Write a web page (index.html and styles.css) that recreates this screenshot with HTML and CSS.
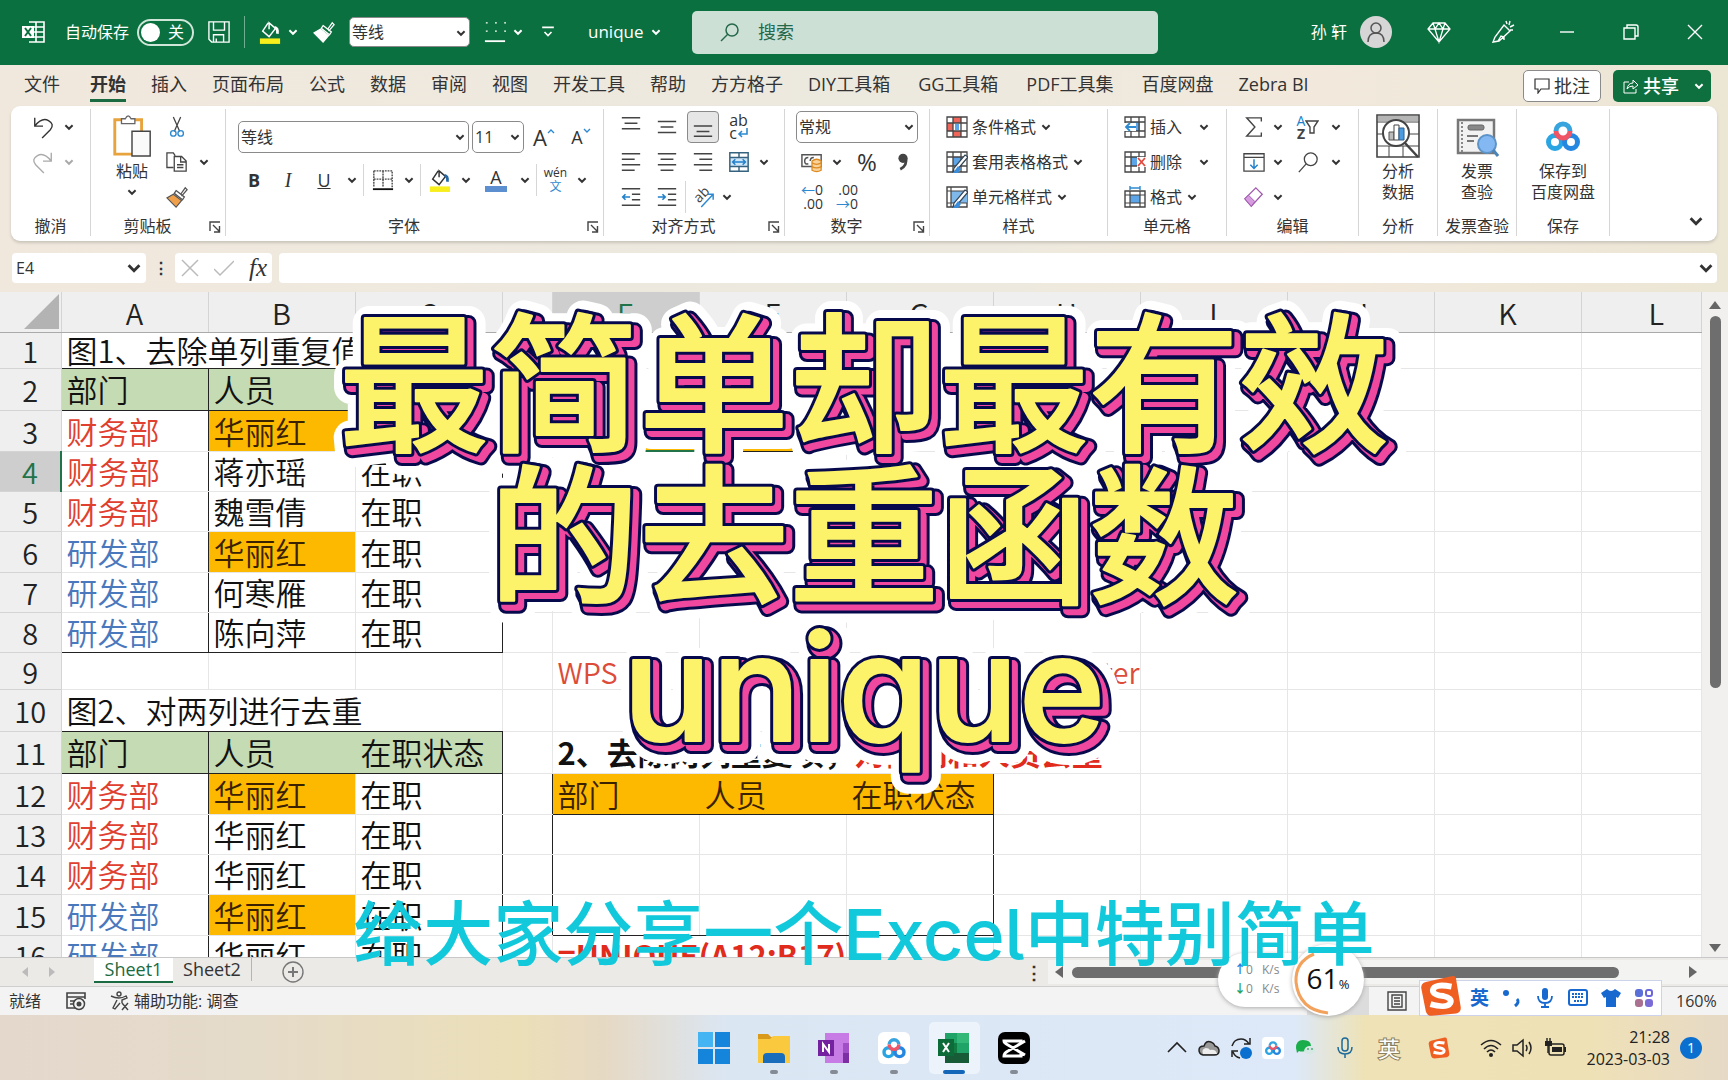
FILE: index.html
```html
<!DOCTYPE html>
<html lang="zh-CN">
<head>
    <meta charset="UTF-8">
    <meta name="viewport" content="width=device-width, initial-scale=1.0">
    <title>unique - Excel</title>
    <link rel="stylesheet" href="styles.css">
</head>
<body>

    <!-- shared icons -->
    <svg class="defs" aria-hidden="true">
        <symbol id="chev" viewBox="0 0 10 10"><path d="M2 3.5l3 3 3-3" fill="none" stroke="currentColor" stroke-width="1.6"/></symbol>
        <symbol id="bucket" viewBox="0 0 24 26"><path d="M10 3L4 12l7 6 7-9-7-6v7" fill="none" stroke="currentColor" stroke-width="1.6"/><path d="M17 8q4 1 3 7" fill="none" stroke="var(--drip)" stroke-width="3"/><path d="M1 20h22v6H1z" fill="#f7ee1b"/></symbol>
        <symbol id="brush" viewBox="0 0 24 24"><path d="M16 9l5-7 2 2-6 7" fill="none" stroke="currentColor" stroke-width="1.4"/><path d="M11 5l9 7-2 3-9-7z" fill="none" stroke="currentColor" stroke-width="1.4"/><path d="M8 9l9 7-6 7L1 13z" fill="var(--hair)" stroke="currentColor" stroke-width="1.2"/></symbol>
        <symbol id="launch" viewBox="0 0 12 12"><path d="M1 10V1h10M4 4l6 6M10.500 5v6H5" fill="none" stroke="#444" stroke-width="1.4"/></symbol>
        <symbol id="cells" viewBox="0 0 22 22"><path d="M1 1h20v20H1z" fill="#fff"/><path d="M7 6h9v9H7z" fill="#5ba5e8"/><path d="M1 1h20v20H1zM1 6h20M1 15h20M7 1v20M15 1v20" fill="none" stroke="#444" stroke-width="1.3"/></symbol>
        <symbol id="pan" viewBox="0 0 34 32"><g fill="none" stroke-width="5"><circle cx="9" cy="22" r="6.500" stroke="#29a5e3"/><circle cx="25" cy="22" r="6.500" stroke="#2587e0"/><path d="M10 11a7 7 0 0 1 14 0" stroke="#38a4dd"/><path d="M10 11a7 7 0 0 0 14 0" stroke="#ef5565"/></g></symbol>
        <symbol id="sogou" viewBox="0 0 36 36"><path d="M5 6L27 1q4-1 4 3l4 24q0 4-4 5L10 35q-4 0-5-4L1 11q0-4 4-5z" fill="#ef5f22"/><path d="M27 10q-15-3-16 3 0 4 9 5 8 2 6 6-3 5-17 1" fill="none" stroke="#fff" stroke-width="5"/></symbol>
    </svg>

    <header class="titlebar">
        <div class="quick">
            <svg class="logo" viewBox="0 0 24 24"><path d="M8 2h15v20H8M8 7h15M8 12h15M8 17h15M15 2v20" fill="none" stroke="#fff" stroke-width="1.6"/><path d="M1 6h12v12H1z" fill="#fff"/><path d="M4 8l6 8M10 8l-6 8" stroke="#0b703f" stroke-width="2"/></svg>
            <label class="autosave">自动保存 <input type="checkbox"><span class="switch">关</span></label>
            <button class="icon" aria-label="保存"><svg viewBox="0 0 24 24"><path d="M1 1h22v22H4l-3-3zM6 1v9h12V1M6 23v-8h11v8M9 23v-4" fill="none" stroke="currentColor" stroke-width="1.5"/></svg></button>
            <i class="rule"></i>
            <button class="split" aria-label="填充颜色"><svg class="ic"><use href="#bucket"/></svg><svg class="chev"><use href="#chev"/></svg></button>
            <button class="icon" aria-label="格式刷"><svg><use href="#brush"/></svg></button>
            <span class="combo qfont"><select aria-label="字体"><option>等线</option></select><svg class="chev"><use href="#chev"/></svg></span>
            <button class="split" aria-label="边框"><svg class="ic" viewBox="0 0 24 24"><path d="M2 2h22M2 11h22" stroke="currentColor" stroke-width="1.5" stroke-dasharray="2 8"/><path d="M1 22h22" stroke="currentColor" stroke-width="2"/></svg><svg class="chev"><use href="#chev"/></svg></button>
            <button class="icon more" aria-label="自定义"><svg viewBox="0 0 12 12"><path d="M1 2h10M3 6l3 3 3-3" fill="none" stroke="currentColor" stroke-width="1.4"/></svg></button>
            <button class="doc">unique <svg class="chev"><use href="#chev"/></svg></button>
        </div>
        <label class="search">
            <svg viewBox="0 0 20 20"><circle cx="12" cy="8" r="6" fill="none" stroke="#25684a" stroke-width="1.5"/><path d="M8 12l-7 7" stroke="#25684a" stroke-width="1.5"/></svg>
            <input type="text" placeholder="搜索" aria-label="搜索">
        </label>
        <div class="account">
            <span>孙 轩</span>
            <svg class="avatar" viewBox="0 0 32 32"><circle cx="16" cy="16" r="16" fill="#d6d6d6"/><circle cx="16" cy="12" r="5" fill="none" stroke="#555" stroke-width="1.5"/><path d="M8 26q0-9 8-9t8 9" fill="none" stroke="#555" stroke-width="1.5"/></svg>
            <button aria-label="会员"><svg viewBox="0 0 24 24"><path d="M6 3h12l5 6-11 13L1 9zM1 9h22M8 9l4 13 4-13M6 3l2 6 4-6 4 6 2-6" fill="none" stroke="currentColor" stroke-width="1.3"/></svg></button>
            <button aria-label="画笔"><svg viewBox="0 0 24 24"><path d="M13 5l6 6L8 21l-6 1 2-5zM7 21l3-5 3 1v3M15 1l1 3M19 1l-1 4M23 5l-4 2M22 10h-3" fill="none" stroke="currentColor" stroke-width="1.4"/></svg></button>
            <button aria-label="最小化"><svg viewBox="0 0 24 24"><path d="M5 12h14" stroke="currentColor" stroke-width="1.4"/></svg></button>
            <button aria-label="还原"><svg viewBox="0 0 24 24"><path d="M5 8h11v11H5zM8 8V5h9q2 0 2 2v9h-3" fill="none" stroke="currentColor" stroke-width="1.4"/></svg></button>
            <button aria-label="关闭"><svg viewBox="0 0 24 24"><path d="M5 5l14 14M19 5L5 19" stroke="currentColor" stroke-width="1.4"/></svg></button>
        </div>
    </header>

    <nav class="tabs">
        <a href="#">文件</a>
        <a href="#" class="active">开始</a>
        <a href="#">插入</a>
        <a href="#">页面布局</a>
        <a href="#">公式</a>
        <a href="#">数据</a>
        <a href="#">审阅</a>
        <a href="#">视图</a>
        <a href="#">开发工具</a>
        <a href="#">帮助</a>
        <a href="#">方方格子</a>
        <a href="#" class="addin">DIY工具箱</a>
        <a href="#" class="addin">GG工具箱</a>
        <a href="#" class="addin">PDF工具集</a>
        <a href="#">百度网盘</a>
        <a href="#">Zebra BI</a>
        <button class="comment"><svg viewBox="0 0 16 16"><path d="M1 1h14v10H7l-3 4v-4H1z" fill="none" stroke="currentColor" stroke-width="1.2"/></svg>批注</button>
        <button class="share"><svg viewBox="0 0 16 16"><path d="M6 4H1v11h12v-4M4 11q1-6 6-6V2l5 5-5 4V8q-4 0-6 3z" fill="none" stroke="currentColor" stroke-width="1"/></svg>共享<svg class="chev"><use href="#chev"/></svg></button>
    </nav>

    <section class="ribbon">
        <div class="group undo">
            <div class="tools">
                <button aria-label="撤消"><svg class="ic" viewBox="0 0 24 24"><path d="M3 2v9h9M3 11q8-10 15-6t2 10l-9 9" fill="none" stroke="currentColor" stroke-width="1.5"/></svg></button>
                <svg class="chev"><use href="#chev"/></svg>
                <button class="off" aria-label="重做"><svg class="ic" viewBox="0 0 24 24"><path d="M21 2v9h-9M21 11Q13 1 6 5t-2 10l9 9" fill="none" stroke="currentColor" stroke-width="1.5"/></svg></button>
                <svg class="chev off"><use href="#chev"/></svg>
            </div>
            <h2>撤消</h2>
        </div>

        <div class="group clip titled">
            <div class="tools">
                <button class="big"><svg viewBox="0 0 40 46"><path d="M2 6h28v36H2z" fill="#fff" stroke="#e8a33d" stroke-width="3"/><path d="M9 10V5h4q3-6 6 0h4v5z" fill="#fff" stroke="#666" stroke-width="1.4"/><path d="M20 18h19v26H20z" fill="#fafafa" stroke="#444" stroke-width="1.5"/></svg>粘贴<svg class="chev"><use href="#chev"/></svg></button>
                <button aria-label="剪切"><svg class="ic" viewBox="0 0 24 24"><path d="M8 1l7 16M16 1L9 17" stroke="#444" stroke-width="1.4"/><circle cx="8" cy="19" r="3" fill="none" stroke="#2e8ad0" stroke-width="1.5"/><circle cx="16" cy="19" r="3" fill="none" stroke="#2e8ad0" stroke-width="1.5"/></svg></button>
                <i></i>
                <button aria-label="复制"><svg class="ic" viewBox="0 0 24 24"><path d="M8 18H1V2h7l2 3M9 6h8l5 5v11H9zM16 6v6h6M12 15h7M12 18h7" fill="none" stroke="#444" stroke-width="1.4"/></svg></button>
                <svg class="chev"><use href="#chev"/></svg>
                <button class="painter" aria-label="格式刷"><svg class="ic"><use href="#brush"/></svg></button>
            </div>
            <h2>剪贴板</h2>
            <svg class="launch"><use href="#launch"/></svg>
        </div>

        <div class="group font titled">
            <div class="tools">
                <div class="row">
                    <span class="combo family"><select aria-label="字体名称"><option>等线</option></select><svg class="chev"><use href="#chev"/></svg></span>
                    <span class="combo size"><select aria-label="字号"><option>11</option></select><svg class="chev"><use href="#chev"/></svg></span>
                    <button class="grow">A<svg viewBox="0 0 8 8"><path d="M1 6l3-3 3 3" fill="none" stroke="#2e8ad0" stroke-width="1.4"/></svg></button>
                    <button class="grow less">A<svg viewBox="0 0 8 8"><path d="M1 2l3 3 3-3" fill="none" stroke="#2e8ad0" stroke-width="1.4"/></svg></button>
                </div>
                <div class="row marks">
                    <button><b>B</b></button>
                    <button class="serif"><em>I</em></button>
                    <button><u>U</u></button>
                    <svg class="chev"><use href="#chev"/></svg>
                    <button class="ruled" aria-label="边框"><svg class="ic" viewBox="0 0 24 24"><path d="M2 2h20v18M2 2v18M12 2v18M2 11h20" fill="none" stroke="#444" stroke-width="1.5" stroke-dasharray="2 1"/><path d="M1 22h22" stroke="#111" stroke-width="2"/></svg></button>
                    <svg class="chev"><use href="#chev"/></svg>
                    <button class="ruled" aria-label="填充颜色"><svg class="ic"><use href="#bucket"/></svg></button>
                    <svg class="chev"><use href="#chev"/></svg>
                    <button class="ink">A</button>
                    <svg class="chev"><use href="#chev"/></svg>
                    <button class="ruled pinyin">wén<span>文</span></button>
                    <svg class="chev"><use href="#chev"/></svg>
                </div>
            </div>
            <h2>字体</h2>
            <svg class="launch"><use href="#launch"/></svg>
        </div>

        <div class="group align titled">
            <div class="tools">
                <button aria-label="顶端对齐"><svg class="ic" viewBox="0 0 24 24"><path d="M2 2h20M5 8h14M2 14h20" stroke="#444" stroke-width="1.6"/></svg></button>
                <button aria-label="垂直居中"><svg class="ic" viewBox="0 0 24 24"><path d="M2 6h20M5 12h14M2 18h20" stroke="#444" stroke-width="1.6"/></svg></button>
                <button class="pressed" aria-label="底端对齐"><svg class="ic" viewBox="0 0 24 24"><path d="M2 11h20M5 17h14M2 22h20" stroke="#444" stroke-width="1.6"/></svg></button>
                <button class="wrap">ab<br>c<svg viewBox="0 0 12 12"><path d="M10 1v6H2M5 4L2 7l3 3" fill="none" stroke="#2e8ad0" stroke-width="1.6"/></svg></button>
                <i></i>
                <button aria-label="左对齐"><svg class="ic" viewBox="0 0 24 24"><path d="M2 3h20M2 9h14M2 15h20M2 21h14" stroke="#444" stroke-width="1.6"/></svg></button>
                <button aria-label="居中"><svg class="ic" viewBox="0 0 24 24"><path d="M2 3h20M5 9h14M2 15h20M5 21h14" stroke="#444" stroke-width="1.6"/></svg></button>
                <button aria-label="右对齐"><svg class="ic" viewBox="0 0 24 24"><path d="M2 3h20M8 9h14M2 15h20M8 21h14" stroke="#444" stroke-width="1.6"/></svg></button>
                <button aria-label="合并后居中"><svg class="ic" viewBox="0 0 24 24"><path d="M2 2h20v20H2z" fill="#fff"/><path d="M2 7h20v10H2z" fill="#cfe6f8"/><path d="M2 2h20v20H2zM2 7h20M2 17h20M12 2v5M12 17v5" fill="none" stroke="#35627f" stroke-width="1.6"/><path d="M5 12h14M8 9l-3 3 3 3M16 9l3 3-3 3" fill="none" stroke="#2080cc" stroke-width="1.6"/></svg></button>
                <svg class="chev"><use href="#chev"/></svg>
                <button aria-label="减少缩进"><svg class="ic" viewBox="0 0 24 24"><path d="M2 3h20M13 9h9M13 15h9M2 21h20" stroke="#444" stroke-width="1.6"/><path d="M3 12h8M6 9l-3 3 3 3" fill="none" stroke="#2080cc" stroke-width="1.8"/></svg></button>
                <button aria-label="增加缩进"><svg class="ic" viewBox="0 0 24 24"><path d="M2 3h20M13 9h9M13 15h9M2 21h20" stroke="#444" stroke-width="1.6"/><path d="M2 12h8M7 9l3 3-3 3" fill="none" stroke="#2080cc" stroke-width="1.8"/></svg></button>
                <button class="ruled" aria-label="方向"><svg class="ic" viewBox="0 0 24 24"><text x="2" y="16" font-size="15" fill="#444" transform="rotate(-45 8 12)">ab</text><path d="M9 23L22 9M16 9h6v6" fill="none" stroke="#2e8ad0" stroke-width="1.6"/></svg></button>
                <svg class="chev near"><use href="#chev"/></svg>
            </div>
            <h2>对齐方式</h2>
            <svg class="launch"><use href="#launch"/></svg>
        </div>

        <div class="group number titled">
            <div class="tools">
                <span class="combo format"><select aria-label="数字格式"><option>常规</option></select><svg class="chev"><use href="#chev"/></svg></span>
                <button aria-label="会计格式"><svg class="ic" viewBox="0 0 24 24"><path d="M1 4h21v13H1zM8 7q-4 0-4 4t4 3M14 7q-4 0-4 4" fill="none" stroke="#555" stroke-width="1.6"/><path d="M12 11q5-4 10 0v10q-5 3-10 0z" fill="#f8d29a" stroke="#dd8b20" stroke-width="1.4"/><path d="M12 13q5 3 10 0M12 17q5 3 10 0" fill="none" stroke="#dd8b20" stroke-width="1.4"/></svg></button>
                <svg class="chev"><use href="#chev"/></svg>
                <button class="percent">%</button>
                <button aria-label="千位分隔"><svg class="ic" viewBox="0 0 24 24"><circle cx="12" cy="8" r="5" fill="#444"/><path d="M15 7q2 9-6 13" fill="none" stroke="#444" stroke-width="3"/></svg></button>
                <button class="decimal"><span>←</span>0<br>.00</button>
                <i></i>
                <button class="decimal">.00<br><span>→</span>0</button>
            </div>
            <h2>数字</h2>
            <svg class="launch"><use href="#launch"/></svg>
        </div>

        <div class="group styles">
            <div class="tools list">
                <button><svg class="ic" viewBox="0 0 22 22"><path d="M1 1h20v20H1z" fill="#fff"/><path d="M7 1h8v6H7zM7 15h8v6H7zM1 7h6v8H1z" fill="#f0655a"/><path d="M9 8h4v6H9z" fill="#5ba5e8"/><path d="M1 1h20v20H1zM1 7h20M1 15h20M7 1v20M15 1v20" fill="none" stroke="#444" stroke-width="1.3"/></svg>条件格式<svg class="chev"><use href="#chev"/></svg></button>
                <button><svg class="ic" viewBox="0 0 22 22"><use href="#cells"/><path d="M22 6L11 19l-4 2 1-4L19 4z" fill="#fff" stroke="#345" stroke-width="1.2"/><path d="M12 15l-5 7h5l3-4z" fill="#3a8ddb"/></svg>套用表格格式<svg class="chev"><use href="#chev"/></svg></button>
                <button><svg class="ic" viewBox="0 0 22 22"><path d="M1 1h20v20H1z" fill="#fff" stroke="#444" stroke-width="1.4"/><path d="M5 5h16v12H5z" fill="#7fb9ec"/><path d="M1 5h20M1 17h20M5 1v20" stroke="#444" stroke-width="1.2"/><path d="M22 6L11 19l-4 2 1-4L19 4z" fill="#fff" stroke="#345" stroke-width="1.2"/><path d="M12 15l-5 7h5l3-4z" fill="#3a8ddb"/></svg>单元格样式<svg class="chev"><use href="#chev"/></svg></button>
            </div>
            <h2>样式</h2>
        </div>

        <div class="group cellops">
            <div class="tools list">
                <button><svg class="ic" viewBox="0 0 22 22"><use href="#cells"/><path d="M0 7h12v8H0z" fill="#fff"/><path d="M2 11h10M6 7l-4 4 4 4" fill="none" stroke="#2e8ad0" stroke-width="1.8"/></svg>插入<svg class="chev far"><use href="#chev"/></svg></button>
                <button><svg class="ic" viewBox="0 0 22 22"><use href="#cells"/><path d="M13 6h9v10h-9z" fill="#fff"/><path d="M14 7l7 8M21 7l-7 8" stroke="#e3493c" stroke-width="1.8"/></svg>删除<svg class="chev far"><use href="#chev"/></svg></button>
                <button><svg class="ic" viewBox="0 0 22 22"><path d="M1 5h20v16H1z" fill="#fff" stroke="#444" stroke-width="1.4"/><path d="M6 9h10v8H6z" fill="#5ba5e8"/><path d="M1 9h20M1 17h20M6 5v16M16 5v16" stroke="#444" stroke-width="1.2"/><path d="M6 2h10M6 0v4M16 0v4" stroke="#2e8ad0" stroke-width="1.4"/></svg>格式<svg class="chev"><use href="#chev"/></svg></button>
            </div>
            <h2>单元格</h2>
        </div>

        <div class="group edit">
            <div class="tools">
                <button aria-label="求和"><svg class="ic" viewBox="0 0 24 24"><path d="M20 6V2H4l9 10-9 10h16v-4" fill="none" stroke="#444" stroke-width="1.5"/></svg></button>
                <svg class="chev"><use href="#chev"/></svg>
                <button class="sort"><span>A<br><b>Z</b></span><svg viewBox="0 0 14 16"><path d="M1 2h12L9 8v6H5V8z" fill="none" stroke="#444" stroke-width="1.4"/></svg></button>
                <svg class="chev"><use href="#chev"/></svg>
                <button aria-label="填充"><svg class="ic" viewBox="0 0 24 24"><path d="M1 3h22v19H1zM1 7h22" fill="none" stroke="#444" stroke-width="1.4"/><path d="M12 9v10M8 15l4 4 4-4" fill="none" stroke="#2080cc" stroke-width="1.6"/></svg></button>
                <svg class="chev"><use href="#chev"/></svg>
                <button aria-label="查找"><svg class="ic" viewBox="0 0 24 24"><circle cx="15" cy="9" r="7" fill="none" stroke="#444" stroke-width="1.4"/><path d="M10 14l-8 9" stroke="#444" stroke-width="1.4"/></svg></button>
                <svg class="chev"><use href="#chev"/></svg>
                <button aria-label="清除"><svg class="ic" viewBox="0 0 24 24"><path d="M14 2l7 7L9 22l-7-8z" fill="#fff" stroke="#a05aad" stroke-width="1.4"/><path d="M6 10l7 7-4 5-7-8z" fill="#d79be0" stroke="#a05aad"/></svg></button>
                <svg class="chev"><use href="#chev"/></svg>
            </div>
            <h2>编辑</h2>
        </div>

        <div class="group small">
            <div class="tools">
                <button class="big"><svg viewBox="0 0 44 44"><path d="M1 1h42v42H1z" fill="#fff" stroke="#444" stroke-width="1.6"/><path d="M2 2h40v5H2z" fill="#b5b5b5"/><path d="M1 8h42M1 20h42M1 32h42M13 32v11M27 32v11" stroke="#444"/><circle cx="20" cy="19" r="13" fill="#fff" stroke="#444" stroke-width="2"/><path d="M13 18h5v8h-5z" fill="#bbb" stroke="#555"/><path d="M18 11h5v15h-5z" fill="#fff" stroke="#444"/><path d="M23 14h5v12h-5z" fill="#4a9be0" stroke="#2a5f90"/><path d="M29 29l13 14" stroke="#444" stroke-width="2.500"/></svg>分析<br>数据</button>
            </div>
            <h2>分析</h2>
        </div>

        <div class="group small">
            <div class="tools">
                <button class="big"><svg viewBox="0 0 44 44"><path d="M3 6h36v33H3z" fill="#f2f2f2" stroke="#777" stroke-width="2.500"/><path d="M7 8v30" stroke="#888" stroke-width="2" stroke-dasharray="2 2"/><rect x="13" y="11" width="16" height="5" rx="2" fill="#888" stroke="#666"/><path d="M12 22h11M12 27h7" stroke="#777" stroke-width="2"/><circle cx="32" cy="30" r="9" fill="#84b8f2" stroke="#5c93c8" stroke-width="2"/><path d="M38 36l5 6" stroke="#4c83b8" stroke-width="3"/></svg>发票<br>查验</button>
            </div>
            <h2>发票查验</h2>
        </div>

        <div class="group save">
            <div class="tools">
                <button class="big"><svg viewBox="0 -6 34 44"><use href="#pan" width="34" height="32"/></svg>保存到<br>百度网盘</button>
            </div>
            <h2>保存</h2>
        </div>
        <button class="collapse" aria-label="折叠功能区"><svg class="chev"><use href="#chev"/></svg></button>
    </section>

    <div class="formula">
        <label class="namebox"><input type="text" value="E4" aria-label="名称框"><svg class="chev"><use href="#chev"/></svg></label>
        <span class="grip">⋮</span>
        <div class="fx">
            <button aria-label="取消"><svg viewBox="0 0 20 20"><path d="M2 2l16 16M18 2L2 18" stroke="#bbb" stroke-width="1.5"/></svg></button>
            <button aria-label="输入"><svg viewBox="0 0 20 20"><path d="M0 11l6 6L20 3" fill="none" stroke="#bbb" stroke-width="1.5"/></svg></button>
            <button><i>fx</i></button>
        </div>
        <label class="entry"><input type="text" aria-label="编辑栏"><svg class="chev"><use href="#chev"/></svg></label>
    </div>

    <main class="sheet">
        <div class="gridwrap">
            <table class="grid">
                <colgroup>
                    <col class="c-num"><col class="c-std"><col class="c-std"><col class="c-std"><col class="c-gap"><col class="c-std"><col class="c-std"><col class="c-std"><col class="c-std"><col class="c-std"><col class="c-std"><col class="c-std"><col>
                </colgroup>
                <thead>
                    <tr><th class="corner"><svg viewBox="0 0 34 34"><path d="M34 0v34H0z" fill="#b3b3b3"/></svg></th><th>A</th><th>B</th><th>C</th><th>D</th><th class="sel">E</th><th>F</th><th>G</th><th>H</th><th>I</th><th>J</th><th>K</th><th class="last">L</th></tr>
                </thead>
                <tbody>
                    <tr class="h36"><th>1</th><td colspan="3" class="bb">图1、去除单列重复值</td><td></td><td></td><td></td><td></td><td></td><td></td><td></td><td></td><td></td></tr>
                    <tr class="h42"><th>2</th><td class="head br">部门</td><td class="head flush">人员</td><td class="head br">在职状态</td><td></td><td></td><td></td><td></td><td></td><td></td><td></td><td></td><td></td></tr>
                    <tr class="h41"><th>3</th><td class="red br">财务部</td><td class="hot">华丽红</td><td class="br">在职</td><td></td><td class="hot green"></td><td class="hot bb"></td><td></td><td></td><td></td><td></td><td></td><td></td></tr>
                    <tr class="h40"><th class="sel">4</th><td class="red br">财务部</td><td>蒋亦瑶</td><td class="br">在职</td><td></td><td></td><td></td><td></td><td></td><td></td><td></td><td></td><td></td></tr>
                    <tr class="h40"><th>5</th><td class="red br">财务部</td><td>魏雪倩</td><td class="br">在职</td><td></td><td></td><td></td><td></td><td></td><td></td><td></td><td></td><td></td></tr>
                    <tr class="h41"><th>6</th><td class="blue br">研发部</td><td class="hot">华丽红</td><td class="br">在职</td><td></td><td></td><td></td><td></td><td></td><td></td><td></td><td></td><td></td></tr>
                    <tr class="h40"><th>7</th><td class="blue br">研发部</td><td>何寒雁</td><td class="br">在职</td><td></td><td></td><td></td><td></td><td></td><td></td><td></td><td></td><td></td></tr>
                    <tr class="h40"><th>8</th><td class="blue br bb">研发部</td><td class="bb">陈向萍</td><td class="br bb">在职</td><td></td><td></td><td></td><td></td><td></td><td></td><td></td><td></td><td></td></tr>
                    <tr class="h37"><th>9</th><td></td><td></td><td></td><td></td><td colspan="4" class="note"><div><span>WPS</span><span>filter</span></div></td><td></td><td></td><td></td><td></td></tr>
                    <tr class="h42"><th>10</th><td colspan="3" class="bb">图2、对两列进行去重</td><td></td><td></td><td></td><td></td><td></td><td></td><td></td><td></td><td></td></tr>
                    <tr class="h42"><th>11</th><td class="head br">部门</td><td class="head flush">人员</td><td class="head br">在职状态</td><td></td><td colspan="4" class="title">2、去除两列重复项，<span>对部门和人员去重</span></td><td></td><td></td><td></td><td></td></tr>
                    <tr class="h41"><th>12</th><td class="red br">财务部</td><td class="hot">华丽红</td><td class="br">在职</td><td class="br"></td><td class="hot bt bb flush">部门</td><td class="hot bt bb flush">人员</td><td class="hot bt bb br">在职状态</td><td></td><td></td><td></td><td></td><td></td></tr>
                    <tr class="h40"><th>13</th><td class="red br">财务部</td><td>华丽红</td><td class="br">在职</td><td class="br"></td><td></td><td></td><td class="br"></td><td></td><td></td><td></td><td></td><td></td></tr>
                    <tr class="h40"><th>14</th><td class="red br">财务部</td><td>华丽红</td><td class="br">在职</td><td class="br"></td><td></td><td></td><td class="br"></td><td></td><td></td><td></td><td></td><td></td></tr>
                    <tr class="h41"><th>15</th><td class="blue br">研发部</td><td class="hot">华丽红</td><td class="br">在职</td><td class="br"></td><td class="bb"></td><td class="bb"></td><td class="br bb"></td><td></td><td></td><td></td><td></td><td></td></tr>
                    <tr class="h40"><th>16</th><td class="blue br">研发部</td><td>华丽红</td><td class="br">在职</td><td></td><td colspan="2" class="result">=UNIQUE(A12:B17)</td><td></td><td></td><td></td><td></td><td></td><td></td></tr>
                </tbody>
            </table>
        </div>
        <div class="vscroll">
            <svg viewBox="0 0 12 10"><path d="M6 1l6 8H0z" fill="#666"/></svg>
            <i></i>
            <svg viewBox="0 0 12 10"><path d="M0 1h12L6 9z" fill="#666"/></svg>
        </div>
    </main>

    <div class="sheetbar">
        <div class="arrows"><svg viewBox="0 0 8 10"><path d="M7 0v10L1 5z" fill="#bbb"/></svg><svg viewBox="0 0 8 10"><path d="M1 0v10l6-5z" fill="#bbb"/></svg></div>
        <a href="#" class="active">Sheet1</a>
        <a href="#">Sheet2</a>
        <button aria-label="新工作表"><svg viewBox="0 0 22 22"><circle cx="11" cy="11" r="10" fill="none" stroke="#777" stroke-width="1.4"/><path d="M11 6v10M6 11h10" stroke="#777" stroke-width="2"/></svg></button>
        <span class="grip">⋮</span>
        <div class="hscroll"><svg viewBox="0 0 10 12"><path d="M9 0v12L1 6z" fill="#666"/></svg><i></i><svg viewBox="0 0 10 12"><path d="M1 0v12l8-6z" fill="#666"/></svg></div>
    </div>

    <footer class="status">
        <span>就绪</span>
        <svg viewBox="0 0 20 20"><path d="M9 17H1V2h18v6M1 6h18M4 10h5M4 13h3" fill="none" stroke="#444" stroke-width="1.6"/><circle cx="13" cy="13" r="5.500" fill="none" stroke="#444" stroke-width="1.5"/><circle cx="13" cy="13" r="2.500" fill="#444"/></svg>
        <span class="access"><svg viewBox="0 0 20 20"><circle cx="9" cy="3" r="2" fill="none" stroke="#444" stroke-width="1.4"/><path d="M1 5q8 4 15 0l1 2-5 2v3M7 9l-4 8 2 1 5-6M12 12l6 7M18 12l-6 7" fill="none" stroke="#444" stroke-width="1.4"/></svg>辅助功能: 调查</span>
        <span class="viewon"></span>
        <svg class="pageview" viewBox="0 0 20 20"><path d="M1 1h18v18H1zM5 4h10v12H5zM7 7h6M7 10h6M7 13h6" fill="none" stroke="#444" stroke-width="1.4"/></svg>
        <div class="ime">
            <svg class="s" viewBox="0 0 36 36"><use href="#sogou"/></svg>
            <b>英</b>
            <svg viewBox="0 0 20 20"><circle cx="4" cy="5" r="3" fill="#1769cf"/><path d="M15 11q3 3-2 7" fill="none" stroke="#1769cf" stroke-width="3"/></svg>
            <svg viewBox="0 0 20 20"><rect x="7" y="0" width="6" height="12" rx="3" fill="#1769cf"/><path d="M3 8q0 7 7 7t7-7M10 15v4M6 19h8" fill="none" stroke="#1769cf" stroke-width="1.8"/></svg>
            <svg viewBox="0 0 20 20"><rect x="1" y="2" width="18" height="15" rx="2" fill="none" stroke="#1769cf" stroke-width="2"/><path d="M4 6h12M4 9h12M6 13h8" stroke="#1769cf" stroke-width="2" stroke-dasharray="2 1"/></svg>
            <svg viewBox="0 0 20 20"><path d="M6 1q4 4 8 0l6 4-3 5-2-1v10H5V9l-2 1-3-5z" fill="#1769cf"/></svg>
            <svg viewBox="0 0 20 20"><rect x="1" y="1" width="8" height="8" rx="3" fill="#5a6fd8"/><rect x="12" y="2" width="6" height="6" rx="2" fill="none" stroke="#6a67dc" stroke-width="2"/><rect x="1" y="11" width="8" height="8" rx="3" fill="#a9708f"/><rect x="11" y="11" width="8" height="8" rx="3" fill="#7a6bd6"/></svg>
        </div>
        <span class="zoom">160%</span>
    </footer>

    <div class="taskbar">
        <div class="apps">
            <a href="#" aria-label="开始"><svg viewBox="0 0 32 32"><path d="M0 0h15v15H0zM17 0h15v15H17zM0 17h15v15H0zM17 17h15v15H17z" fill="#1585dc"/><path d="M0 0h15v15H0z" fill="#44b4f2"/></svg></a>
            <a href="#" class="run" aria-label="文件夹"><svg viewBox="0 0 32 32"><path d="M0 2h10l3 3h18v8H0z" fill="#d99a1c"/><path d="M0 7h12l3-3h17v27H0z" fill="#fbc93d"/><path d="M5 31v-6q0-4 4-4h14q4 0 4 4v6z" fill="#1a6dba"/></svg></a>
            <a href="#" class="run" aria-label="OneNote"><svg viewBox="0 0 32 32"><path d="M7 1h24v30H7z" fill="#c67be5"/><path d="M25 11h6v10h-6z" fill="#a14fc7"/><path d="M25 21h6v10h-6z" fill="#7c2fa3"/><path d="M0 8h16v16H0z" fill="#7522a0"/><path d="M5 20v-8l6 8v-8" fill="none" stroke="#fff" stroke-width="2"/></svg></a>
            <a href="#" class="run" aria-label="百度网盘"><svg viewBox="0 0 32 32"><rect width="32" height="32" rx="6" fill="#fff"/><use href="#pan" x="4" y="5" width="24" height="22"/></svg></a>
            <a href="#" class="run active" aria-label="Excel"><svg viewBox="0 0 32 32"><path d="M7 1h24v30H7z" fill="#20a366"/><path d="M19 1h12v10H19z" fill="#33b878"/><path d="M7 11h12v10H7z" fill="#107c41"/><path d="M7 21h24v10H7z" fill="#185c37"/><path d="M0 7h16v17H0z" fill="#0d6b39"/><path d="M5 11l6 9M11 11l-6 9" stroke="#fff" stroke-width="2"/></svg></a>
            <a href="#" class="run" aria-label="剪映"><svg viewBox="0 0 32 32"><rect width="32" height="32" rx="7" fill="#000"/><path d="M27 9L10 19q-4 2-4 5h17v-4M27 23L10 13Q6 11 6 9h17v3" fill="none" stroke="#fff" stroke-width="3"/></svg></a>
        </div>
        <div class="tray">
            <svg viewBox="0 0 22 22"><path d="M2 15l9-9 9 9" fill="none" stroke="#222" stroke-width="1.6"/></svg>
            <svg viewBox="0 0 22 22"><path d="M5 18q-4-1-4-5t5-4q2-6 7-4 3 1 4 4 4 1 4 5t-5 4z" fill="#999" stroke="#222" stroke-width="1.5"/><path d="M5 17q-2-5 3-6 3 0 4 2 6-1 7 4z" fill="#eee"/></svg>
            <svg viewBox="0 0 22 22"><path d="M2 9q2-7 9-7 5 0 8 5M20 1v6h-6M2 20v-6h6M3 15q2 5 7 6" fill="none" stroke="#222" stroke-width="1.5"/><circle cx="16" cy="16" r="6" fill="#0b6fd0"/></svg>
            <svg viewBox="0 0 22 22"><rect width="22" height="22" rx="4" fill="#fff"/><use href="#pan" x="3" y="3" width="16" height="16"/></svg>
            <svg viewBox="0 0 22 22"><path d="M3 16l-1-5q0-8 7-8 8 0 8 6-4 0-6 5-4 1-6 0z" fill="#1aad4b"/><path d="M10 14q1-5 6-5 5 1 5 5-2 4-8 3z" fill="#d5e8e4"/><circle cx="14" cy="12" r="1" fill="#5a7"/><circle cx="18" cy="12" r="1" fill="#5a7"/></svg>
            <svg class="mic" viewBox="0 0 22 22"><rect x="8" y="1" width="6" height="13" rx="3" fill="none" stroke="#1b6a9a" stroke-width="1.5"/><path d="M4 10q0 7 7 7t7-7M11 17v4" fill="none" stroke="#1b6a9a" stroke-width="1.5"/></svg>
            <span class="lang">英</span>
            <svg class="sg"><use href="#sogou"/></svg>
            <svg viewBox="0 0 22 22"><path d="M1 8q10-9 20 0M4 12q7-7 14 0M7 15q4-4 8 0" fill="none" stroke="#222" stroke-width="1.6"/><circle cx="11" cy="18" r="2" fill="#222"/></svg>
            <svg viewBox="0 0 22 22"><path d="M1 8h4l6-5v16l-6-5H1zM14 8q2 3 0 6M17 5q4 6 0 12" fill="none" stroke="#222" stroke-width="1.5"/></svg>
            <svg viewBox="0 0 22 22"><rect x="5" y="7" width="15" height="11" rx="2" fill="none" stroke="#222" stroke-width="1.5"/><path d="M8 10h10v5H8zM1 4h7v5H1zM20 10h2v5h-2z" fill="#222"/><path d="M3 1v4M6 1v4M4 8v8" stroke="#222" stroke-width="1.4"/></svg>
            <time>21:28<br>2023-03-03</time>
            <span class="badge">1</span>
        </div>
    </div>

    <div class="netmeter">
        <ul><li><b class="up">↑</b>0 <span>K/s</span></li><li><b class="down">↓</b>0 <span>K/s</span></li></ul>
        <div class="load"><svg viewBox="0 0 72 72"><path d="M22 10Q3 18 4 38q3 28 32 31" fill="none" stroke="#f2a25c" stroke-width="3"/></svg><p>61<small>%</small></p></div>
    </div>

    <!-- lettering is stacked: white halo, navy rim, pink depth, navy outline, yellow face -->
    <svg class="headline" viewBox="0 0 1120 500">
        <use href="#lettering" class="halo" x="5" y="5"/>
        <use href="#lettering" class="rim" x="5" y="5"/>
        <use href="#lettering" class="depth" x="5" y="5"/>
        <use href="#lettering" class="outline"/>
        <g id="lettering">
            <text x="560" y="140">最简单却最有效</text>
            <text x="560" y="292">的去重函数</text>
            <text x="560" y="441" class="latin">unique</text>
        </g>
    </svg>
    <p class="caption">给大家分享一个Excel中特别简单</p>

</body>
</html>
```
FILE: styles.css
```css
* {
    box-sizing: border-box;
}
body {
    margin: 0;
    height: 100vh;
    display: flex;
    flex-direction: column;
    position: relative;
    overflow: hidden;
    font-family: "Open Sans", "Noto Sans CJK SC", sans-serif;
    font-size: 16px;
    line-height: 20px;
    color: #333;
    background: linear-gradient(90deg, #f1e8dd, #ece9df 50%, #f2e9dc 75%, #ece6d5);
}
button {
    border: 0;
    padding: 0;
    background: none;
    font: inherit;
    color: inherit;
    display: flex;
    align-items: center;
    justify-content: center;
}
a {
    color: inherit;
    text-decoration: none;
}
input, select {
    font: inherit;
    color: inherit;
    border: 0;
    outline: 0;
    min-width: 0;
    background: none;
    appearance: none;
}
svg {
    flex: none;
}
.defs {
    display: none;
}
.chev {
    width: 12px;
    height: 12px;
}
.ic {
    width: 22px;
    height: 24px;
    --drip: #2468a8;
    --hair: #fff;
}
.off {
    color: #aaa;
}

/* title bar */
.titlebar {
    height: 65px;
    flex: none;
    display: flex;
    align-items: center;
    padding-bottom: 1px;
    background: #0b703f;
    color: #fff;
}
.quick {
    width: 692px;
    display: flex;
    align-items: center;
    padding-left: 21px;
}
.logo {
    width: 24px;
    height: 24px;
    margin-right: 20px;
}
.autosave {
    display: flex;
    align-items: center;
    gap: 8px;
}
.autosave input {
    position: absolute;
    opacity: 0;
}
.switch {
    width: 57px;
    height: 27px;
    border: 2px solid #cfe6d9;
    border-radius: 14px;
    display: flex;
    align-items: center;
    gap: 8px;
    padding-left: 2px;
}
.switch::before {
    content: "";
    width: 19px;
    height: 19px;
    border-radius: 50%;
    background: #fff;
}
.quick .icon svg {
    width: 22px;
    height: 22px;
    --hair: #fff;
}
.quick .icon {
    margin-left: 14px;
}
.rule {
    width: 1px;
    height: 32px;
    margin: 0 14px;
    background: #6fae90;
}
.split {
    gap: 6px;
}
.titlebar .split .ic {
    --drip: #fff;
}
.combo {
    position: relative;
    display: flex;
    height: 32px;
    border: 1px solid #8a8a8a;
    border-radius: 5px;
    background: #fff;
    color: #333;
}
.combo select {
    width: 100%;
    padding: 0 2px;
}
.combo .chev {
    position: absolute;
    right: 2px;
    top: 9px;
    pointer-events: none;
}
.qfont {
    width: 121px;
    height: 30px;
    margin: 0 14px;
}
.quick .more svg {
    width: 14px;
    height: 14px;
}
.quick .icon.more {
    margin: 0 33px 0 17px;
}
.doc {
    gap: 6px;
    font-size: 17px;
}
.search {
    flex: 1;
    height: 43px;
    display: flex;
    align-items: center;
    gap: 16px;
    padding-left: 28px;
    border-radius: 5px;
    background: #cde0d6;
}
.search svg {
    width: 20px;
    height: 20px;
}
.search input {
    flex: 1;
    font-size: 18px;
}
.search input::placeholder {
    color: #25684a;
    opacity: 1;
}
.account {
    width: 570px;
    display: flex;
    align-items: center;
    justify-content: flex-end;
    padding-right: 21px;
}
.avatar {
    width: 32px;
    height: 32px;
    margin: 0 35px 0 13px;
}
.account button {
    margin-left: 40px;
}
.account .avatar + button {
    margin-left: 0;
}
.account button svg {
    width: 24px;
    height: 24px;
}

/* tabs */
.tabs {
    height: 41px;
    flex: none;
    display: flex;
    align-items: center;
    gap: 25px;
    padding: 0 17px 0 24px;
    font-size: 18px;
    white-space: nowrap;
}
.tabs a {
    line-height: 30px;
    border-bottom: 3px solid transparent;
}
.tabs a:first-child {
    margin-right: 5px;
}
.tabs .addin {
    margin-right: 3px;
}
.tabs .active {
    font-weight: bold;
    border-color: #1b6b42;
}
.tabs button {
    height: 32px;
    border-radius: 5px;
    gap: 4px;
    padding: 0 10px;
}
.tabs button svg {
    width: 16px;
    height: 16px;
}
.tabs button .chev {
    width: 12px;
    height: 12px;
    margin-left: 10px;
}
.comment {
    margin-left: auto;
    background: #fff;
    border: 1px solid #8a8a8a;
}
.tabs .share {
    margin-left: -13px;
    padding: 0 6px 0 10px;
    background: #0f703f;
    color: #fff;
    font-weight: 500;
}

/* ribbon */
.ribbon {
    height: 135px;
    flex: none;
    display: flex;
    margin: 0 11px;
    padding: 3px 0 5px;
    border-radius: 9px;
    background: #fff;
    box-shadow: 0 2px 3px #c9c4ba;
    position: relative;
}
.group {
    flex: none;
    position: relative;
    display: flex;
    flex-direction: column;
    border-right: 1px solid #d6d6d6;
}
.group h2 {
    margin: 0;
    font-size: 16px;
    font-weight: normal;
    line-height: 20px;
    text-align: center;
    white-space: nowrap;
}
.titled h2 {
    padding-right: 21px;
}
.tools {
    flex: 1;
    display: grid;
    grid-template-rows: repeat(3, 35px);
    align-items: center;
    justify-items: center;
    align-content: start;
    justify-content: start;
}
.group .launch {
    position: absolute;
    right: 4px;
    bottom: 3px;
    width: 12px;
    height: 12px;
}
.big {
    grid-row: 1 / 4;
    align-self: start;
    display: block;
    padding-top: 5px;
    line-height: 21px;
    text-align: center;
    white-space: nowrap;
}
.big svg {
    display: block;
    width: 44px;
    height: 44px;
    margin: 0 auto 3px;
}
.big .chev {
    width: 12px;
    height: 12px;
    margin: 4px auto 0;
}
.undo {
    width: 80px;
}
.undo .tools {
    grid-template-columns: 28px 24px;
    padding-left: 18px;
}
.clip {
    width: 135px;
}
.clip .tools {
    grid-template-columns: 56px 34px 20px;
    padding-left: 13px;
}
.painter {
    color: #555;
}
.painter .ic {
    --hair: #f0a04b;
}
.font {
    width: 378px;
}
.font .tools {
    display: flex;
    flex-direction: column;
    justify-content: flex-start;
    align-items: stretch;
    padding: 12px 0 0 12px;
    gap: 11px;
}
.row {
    display: flex;
    align-items: center;
    gap: 3px;
    height: 32px;
}
.family {
    width: 231px;
}
.size {
    width: 52px;
}
.grow {
    width: 34px;
    font-size: 22px;
}
.less {
    font-size: 18px;
}
.grow svg {
    width: 8px;
    height: 8px;
    margin-bottom: 12px;
}
.marks {
    gap: 0;
    font-size: 18px;
}
.marks button {
    width: 36px;
}
.marks button:nth-child(1) {
    width: 32px;
}
.serif {
    font-family: "Liberation Serif", serif;
    font-size: 20px;
}
.marks .chev {
    margin: 0 5px 0 4px;
}
.marks .ruled {
    padding-left: 2px;
}
.ruled {
    border-left: 1px solid #d6d6d6;
    height: 32px;
}
.marks .ink {
    height: 24px;
    line-height: 18px;
    width: 22px;
    margin: 0 8px;
    border-bottom: 6px solid #5b8fcf;
}
.marks .pinyin {
    display: block;
    font-size: 12px;
    line-height: 14px;
}
.pinyin span {
    display: block;
    color: #2e8ad0;
}
.align {
    width: 181px;
}
.align .tools {
    grid-template-columns: repeat(4, 36px) 14px;
    padding-left: 9px;
}
.align .ruled {
    width: 36px;
}
.pressed {
    width: 32px;
    height: 32px;
    border: 1px solid #8a8a8a;
    border-radius: 4px;
    background: #e6e6e6;
}
.wrap {
    display: block;
    line-height: 13px;
    text-align: left;
}
.wrap svg {
    width: 12px;
    height: 12px;
}
.near {
    justify-self: start;
}
.number {
    width: 145px;
}
.number .tools {
    grid-template-columns: 32px 18px 42px 30px;
    padding-left: 11px;
}
.format {
    grid-column: 1 / 5;
    width: 122px;
}
.percent {
    font-size: 24px;
}
.decimal {
    display: block;
    font-size: 14px;
    line-height: 14px;
    text-align: right;
}
.decimal span {
    color: #2e8ad0;
}
.decimal:last-child {
    justify-self: start;
    margin-left: -10px;
}
.styles {
    width: 178px;
}
.list {
    justify-items: start;
    padding-left: 16px;
}
.list button {
    gap: 4px;
}
.list .far {
    margin-left: 12px;
}
.cellops {
    width: 119px;
}
.edit {
    width: 132px;
}
.edit .tools {
    grid-template-columns: 34px 14px 46px 10px;
    padding-left: 10px;
}
.sort {
    font-size: 14px;
    line-height: 13px;
    color: #2080cc;
}
.sort b {
    color: #444;
}
.sort svg {
    width: 14px;
    height: 18px;
}
.small {
    width: 79px;
}
.small .tools, .save .tools {
    justify-content: center;
}
.save {
    width: 93px;
}
.save .big svg {
    width: 36px;
}
.collapse {
    margin: auto 12px 6px auto;
}
.collapse .chev, .formula .chev {
    width: 18px;
    height: 18px;
}

/* formula bar */
.formula {
    flex: none;
    height: 51px;
    display: flex;
    align-items: center;
    padding: 2px 11px 0 12px;
}
.formula label, .fx {
    height: 30px;
    display: flex;
    align-items: center;
    border-radius: 4px;
    background: #fff;
}
.namebox {
    width: 134px;
    padding: 0 3px 0 4px;
}
.formula input {
    flex: 1;
    padding: 0;
}
.grip {
    width: 29px;
    text-align: center;
    font-weight: bold;
}
.fx {
    width: 97px;
    margin-right: 7px;
    padding: 0 5px;
    justify-content: space-between;
}
.fx svg {
    width: 20px;
    height: 20px;
}
.fx i {
    font-family: "Liberation Serif", serif;
    font-size: 25px;
}
.formula .entry {
    flex: 1;
    padding-right: 2px;
}

/* worksheet */
.sheet {
    flex: 1;
    min-height: 0;
    display: flex;
    background: #fff;
}
.gridwrap {
    flex: 1;
    overflow: hidden;
}
.grid {
    width: 100%;
    table-layout: fixed;
    border-collapse: collapse;
    font-family: "Noto Sans CJK SC", sans-serif;
    font-size: 31px;
    font-weight: 350;
    line-height: 32px;
    color: #111;
}
.c-num {
    width: 61px;
}
.c-std {
    width: 147px;
}
.c-gap {
    width: 50px;
}
.grid td {
    padding: 0 0 0 5px;
    border: 1px solid #e6e6e6;
    white-space: nowrap;
}
.grid th {
    padding: 0;
    font-size: 29px;
    font-weight: 350;
    color: #222;
    background: #efefef;
    border: 1px solid #d4d4d4;
    border-left: 0;
}
.grid thead th {
    height: 40px;
    border-top: 0;
    border-bottom-color: #aaa;
}
.grid thead .last {
    padding-left: 30px;
}
.grid .corner {
    text-align: right;
    padding: 0 2px 0 0;
}
.corner svg {
    width: 35px;
    height: 35px;
    vertical-align: bottom;
}
.grid .sel {
    background: #cecece;
    color: #21734a;
}
.grid tbody .sel {
    border-right: 2px solid #21734a;
}
.h36 { height: 36px; }
.h37 { height: 37px; }
.h40 { height: 40px; }
.h41 { height: 41px; }
.h42 { height: 42px; }
.grid .head {
    background: #c5dbb3;
    border-top-color: #222;
    border-bottom-color: #222;
}
.grid .hot {
    background: #fdb900;
    border-top-color: #fdb900;
    color: #3a2200;
}
.grid .flush {
    border-right-color: #c5dbb3;
}
.grid .hot.flush {
    border-right-color: #fdb900;
}
.grid .br {
    border-right-color: #222;
}
.grid .bb {
    border-bottom-color: #222;
}
.grid .bt {
    border-top-color: #222;
}
.grid .green {
    border-bottom: 2px solid #21734a;
}
.red {
    color: #e0402f;
}
.blue {
    color: #4a78bd;
}
.grid .note {
    color: #dd4b39;
    font-size: 29px;
    padding-right: 0;
}
.note div {
    display: flex;
    justify-content: space-between;
}
.title, .result {
    font-weight: bold;
}
.title span, .result {
    color: #e02b1d;
}
.vscroll {
    width: 26px;
    display: flex;
    flex-direction: column;
    align-items: center;
    justify-content: space-between;
    padding: 8px 0 4px;
    background: #f1f0ee;
}
.vscroll svg {
    width: 12px;
    height: 10px;
}
.vscroll i {
    width: 11px;
    height: 57%;
    margin: 6px 0 auto;
    border-radius: 6px;
    background: #6e6e6e;
}

/* sheet tabs */
.sheetbar {
    flex: none;
    height: 29px;
    display: flex;
    align-items: center;
    background: #ebeae7;
    border-top: 1px solid #c8c8c8;
    font-size: 18px;
}
.arrows {
    width: 94px;
    display: flex;
    gap: 19px;
    padding-left: 21px;
}
.arrows svg {
    width: 8px;
    height: 10px;
}
.sheetbar a {
    width: 79px;
    align-self: flex-start;
    line-height: 23px;
    text-align: center;
    border-right: 1px solid #b5b5b5;
}
.sheetbar .active {
    background: #fff;
    color: #1b6b42;
    border-right: 0;
    border-bottom: 2px solid #1b6b42;
    font-weight: 500;
}
.sheetbar button svg {
    width: 22px;
    height: 22px;
}
.sheetbar button {
    margin-left: 30px;
}
.sheetbar .grip {
    margin-left: auto;
}
.hscroll {
    width: 40%;
    max-width: 680px;
    height: 24px;
    display: flex;
    align-items: center;
    padding: 0 30px 0 6px;
    background: #f3f3f2;
}
.hscroll svg {
    width: 10px;
    height: 12px;
}
.hscroll i {
    width: 85%;
    height: 11px;
    margin: 0 auto 0 8px;
    border-radius: 6px;
    background: #6e6e6e;
}

/* status bar */
.status {
    flex: none;
    height: 29px;
    display: flex;
    align-items: center;
    padding: 0 9px;
    background: #f3f3f3;
    border-top: 1px solid #cfcfcf;
}
.status svg {
    width: 20px;
    height: 20px;
}
.status > svg {
    margin: 0 24px 0 25px;
}
.access {
    display: flex;
    align-items: center;
    gap: 4px;
}
.viewon {
    width: 62px;
    height: 28px;
    margin-left: auto;
    background: #dcdcdc;
}
.status .pageview {
    margin: 0 12px 0 18px;
}
.ime {
    height: 36px;
    margin: -6px 14px 0 0;
    position: relative;
    display: flex;
    align-items: center;
    gap: 13px;
    padding-right: 7px;
    background: #fff;
    border: 1px solid #cdd3ea;
}
.ime .s {
    width: 42px;
    height: 42px;
    margin: -4px -5px 0 0;
}
.ime b {
    font-size: 19px;
    color: #1769cf;
}
.zoom {
    width: 43px;
}

/* taskbar */
.taskbar {
    flex: none;
    height: 65px;
    display: grid;
    grid-template-columns: 1fr auto 1fr;
    align-items: center;
    background: linear-gradient(90deg, #e4d8cd, #e5dbc9 15%, #ebdfb8 30%, #e6d9c4 35%, #dbe6f3 42%, #dde9f8 75%, #eee2b6 79%, #efe1b6 92%, #e6d9c6);
}
.apps {
    grid-column: 2;
    display: flex;
    gap: 9px;
}
.apps a {
    width: 51px;
    height: 52px;
    display: flex;
    flex-direction: column;
    align-items: center;
    padding-top: 10px;
    border-radius: 5px;
}
.apps svg {
    width: 32px;
    height: 32px;
}
.apps .run::after {
    content: "";
    width: 8px;
    height: 4px;
    margin-top: 6px;
    border-radius: 2px;
    background: #858b95;
}
.apps .active {
    background: #edf3fb;
}
.apps .active::after {
    width: 22px;
    background: #1467b8;
}
.tray {
    display: flex;
    align-items: center;
    justify-content: flex-end;
    gap: 10px;
    padding-right: 26px;
}
.tray svg {
    width: 22px;
    height: 22px;
}
.tray .mic {
    margin: 0 12px 0 8px;
}
.lang {
    font-size: 22px;
    color: #fff;
    -webkit-text-stroke: 2px #8a8060;
    paint-order: stroke fill;
    margin-right: 18px;
}
.tray .sg {
    margin-right: 20px;
}
.tray time {
    width: 86px;
    margin-left: 8px;
    line-height: 22px;
    text-align: right;
    color: #222;
}
.badge {
    width: 22px;
    height: 22px;
    border-radius: 50%;
    background: #0b6fd0;
    color: #fff;
    font-size: 14px;
    line-height: 22px;
    text-align: center;
}

/* floating network meter */
.netmeter {
    position: absolute;
    right: 364px;
    bottom: 64px;
    height: 72px;
    width: 146px;
    display: flex;
    align-items: center;
}
.netmeter ul {
    flex: 1;
    height: 54px;
    margin: 0 -36px 0 0;
    padding: 7px 0 0 16px;
    list-style: none;
    border-radius: 27px;
    background: #fff;
    box-shadow: 0 1px 4px #aaa;
    font-size: 12px;
    line-height: 19px;
    color: #888;
}
.netmeter li span {
    margin-left: 6px;
}
.up {
    color: #2f80e0;
}
.down {
    color: #2fa35a;
}
.load {
    position: relative;
    width: 72px;
    height: 72px;
    border-radius: 50%;
    background: #fff;
    box-shadow: 0 1px 4px #aaa;
}
.load svg {
    position: absolute;
}
.load p {
    margin: 0;
    line-height: 68px;
    text-align: center;
    font-size: 28px;
    color: #111;
}
.load small {
    font-size: 13px;
}

/* video titles laid over the window */
.headline {
    position: absolute;
    top: 300px;
    left: calc(50% - 560px);
    width: 1120px;
    height: 500px;
    overflow: visible;
    pointer-events: none;
    font-family: Inter, "Noto Sans CJK SC", sans-serif;
    font-size: 150px;
    font-weight: 500;
    text-anchor: middle;
    stroke-linejoin: round;
    fill: #fdf36a;
    stroke: #fdf36a;
    stroke-width: 2px;
}
.latin {
    font-size: 148px;
}
.halo {
    fill: #fff;
    stroke: #fff;
    stroke-width: 34px;
}
.rim {
    fill: #060a4c;
    stroke: #060a4c;
    stroke-width: 16px;
}
.depth {
    fill: #f0479f;
    stroke: #f0479f;
    stroke-width: 10px;
}
.outline {
    fill: #060a4c;
    stroke: #060a4c;
    stroke-width: 8px;
}
.caption {
    position: absolute;
    bottom: 105px;
    left: 0;
    right: 0;
    margin: 0;
    text-align: center;
    font-family: Inter, "Noto Sans CJK SC", sans-serif;
    font-feature-settings: "cv05";
    font-size: 70px;
    font-weight: 500;
    line-height: 80px;
    color: #12c9dc;
    pointer-events: none;
}
```
